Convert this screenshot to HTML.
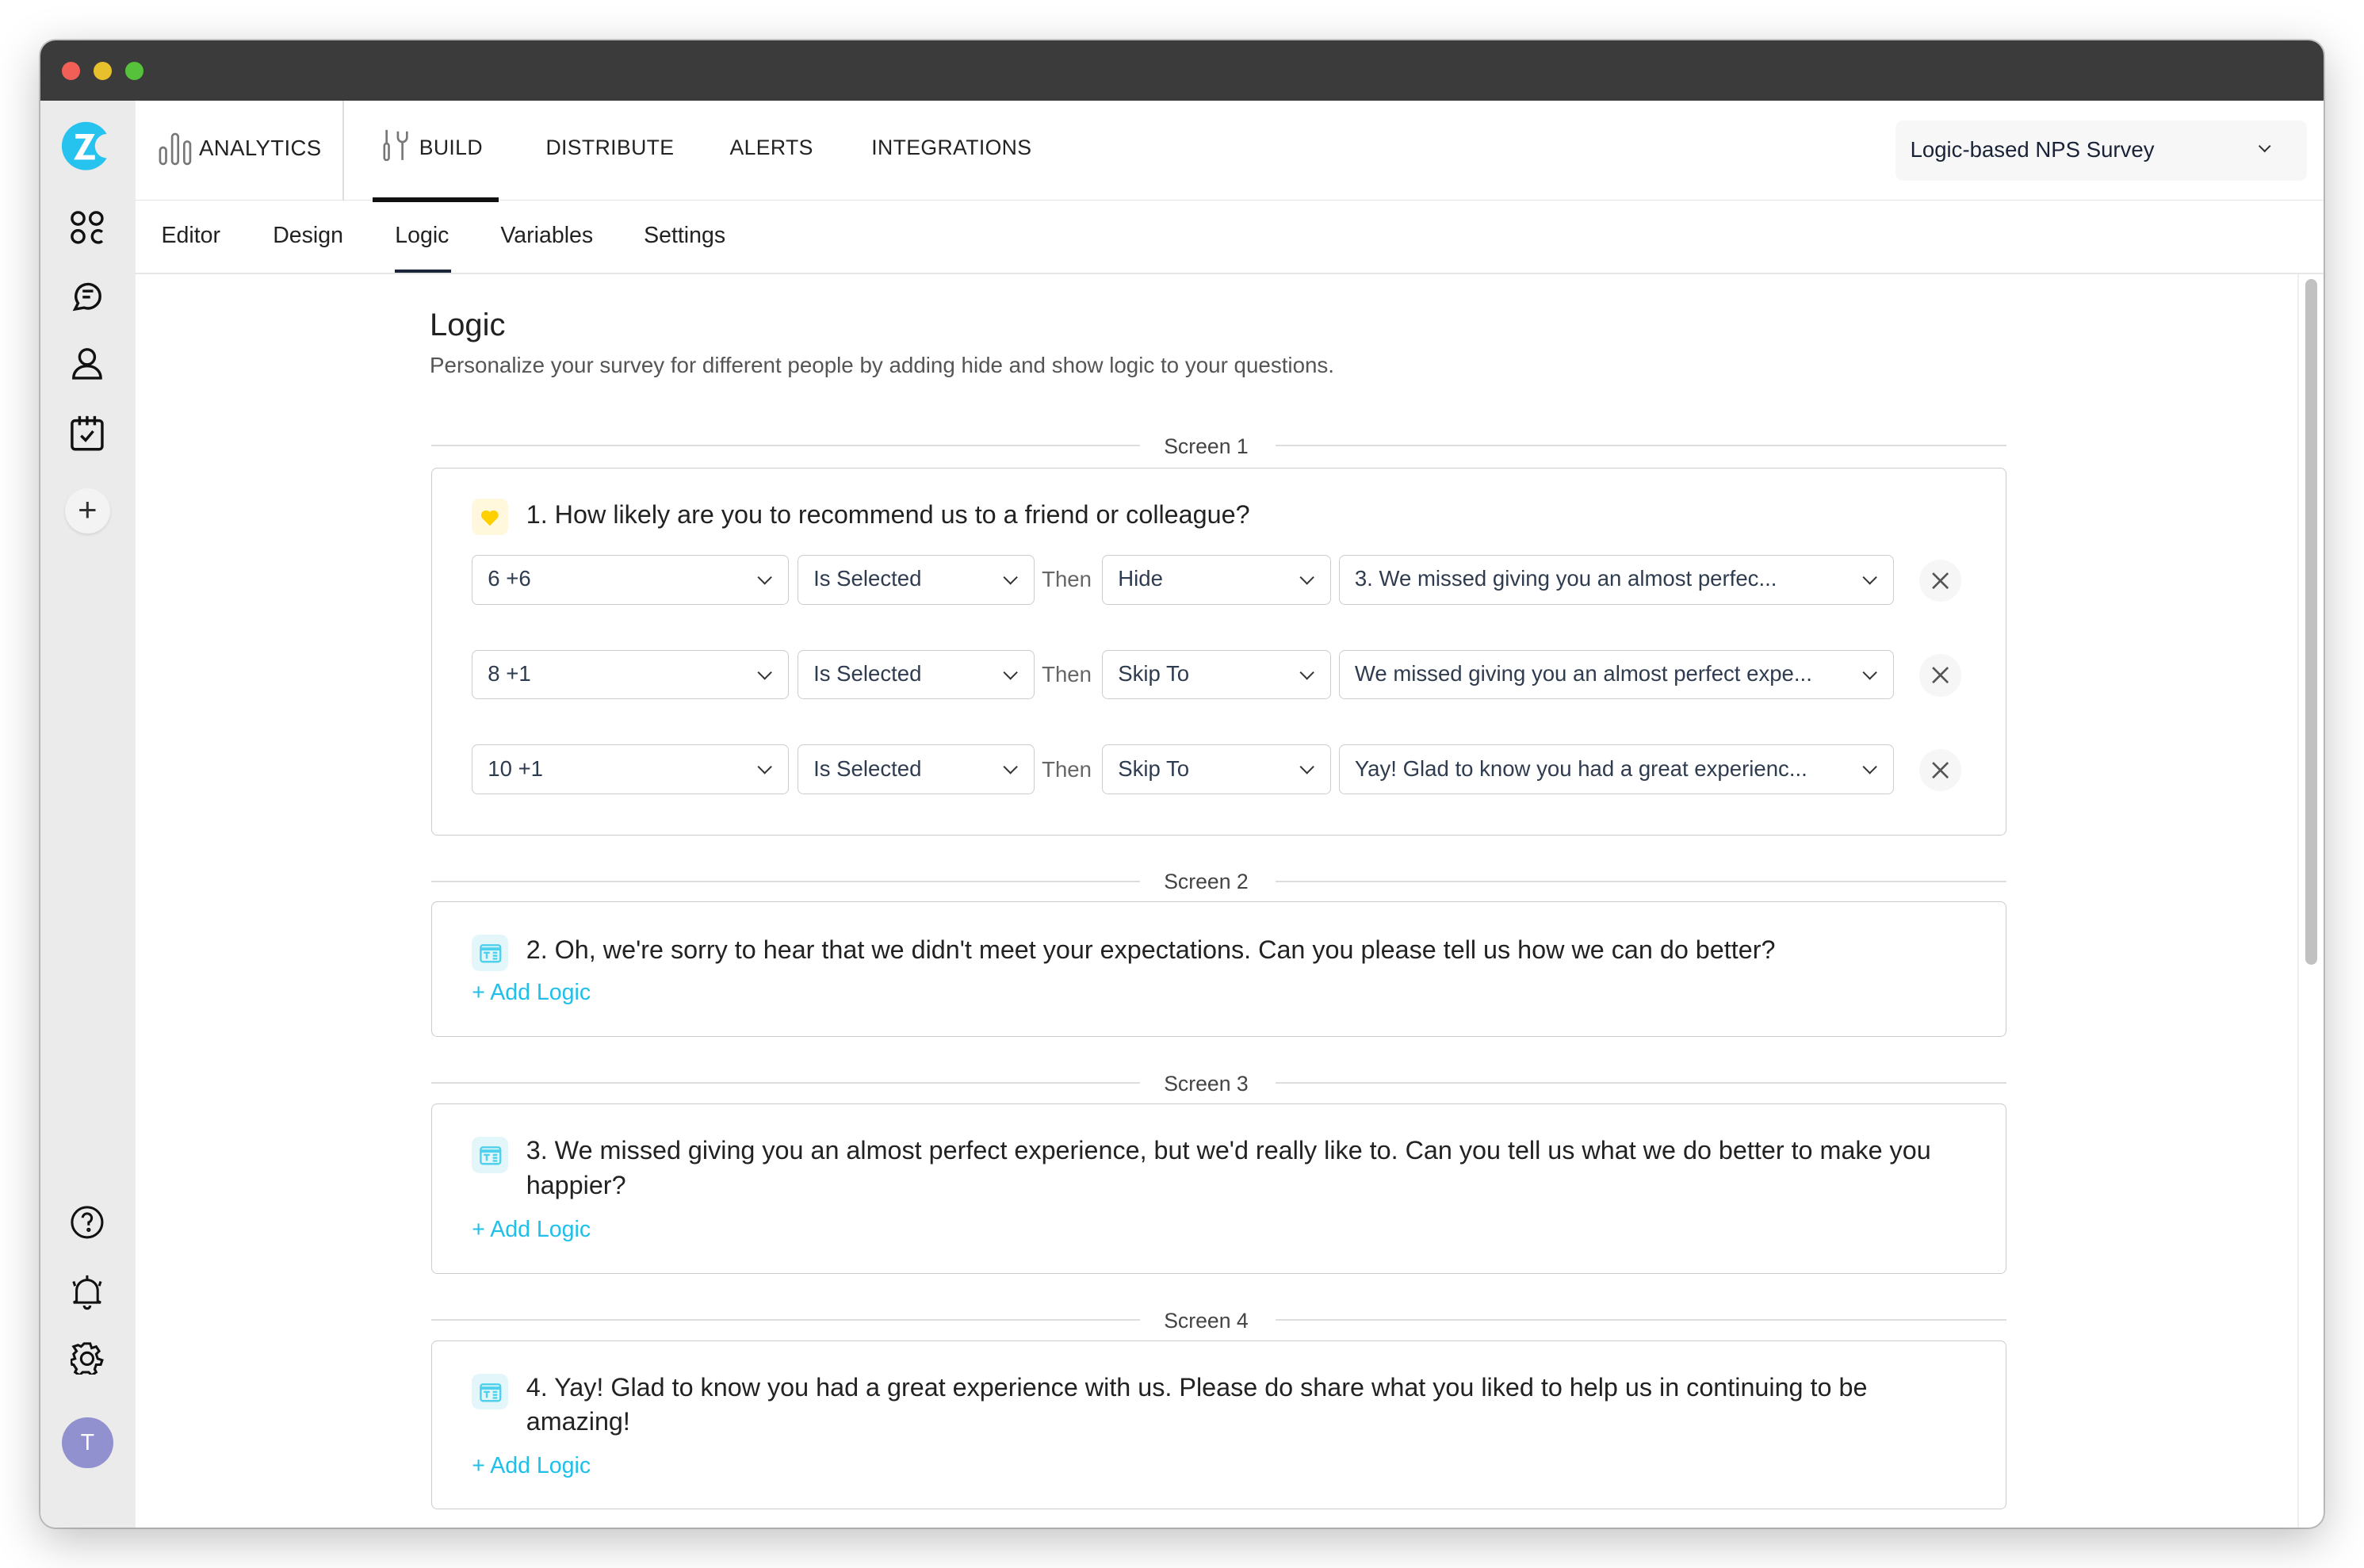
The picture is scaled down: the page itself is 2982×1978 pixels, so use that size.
<!DOCTYPE html>
<html><head><meta charset="utf-8">
<style>
*{box-sizing:border-box;margin:0;padding:0}
html,body{width:2982px;height:1978px;overflow:hidden;background:#fff}
#w{zoom:1.9018;width:1568px;height:1040px;position:relative;font-family:"Liberation Sans",sans-serif;color:#222}
.a{position:absolute}
.win{left:27px;top:27px;width:1514px;height:986px;border-radius:10px;overflow:hidden;background:#fff;box-shadow:0 8px 30px rgba(0,0,0,.25),0 0 0 1px rgba(0,0,0,.2)}
.title{left:0;top:0;width:1514px;height:40px;background:#3b3b3b}
.dot{width:12px;height:12px;border-radius:50%;top:14px}
.side{left:0;top:40px;width:63px;height:946px;background:#ebebeb}
.top{left:63px;top:40px;width:1451px;height:66px;border-bottom:1px solid #e6e6e6}
.nav{font-size:14px;color:#222;letter-spacing:.2px;top:23px}
.sub{font-size:15px;top:121px}
.field{height:33px;border:1px solid #ccc;border-radius:4px;font-size:14.5px;color:#2f3c50;padding:7px 10px;white-space:nowrap;overflow:hidden}
.chev{position:absolute;right:12px;top:11px;width:7px;height:7px;border-right:1.1px solid #333;border-bottom:1.1px solid #333;transform:rotate(45deg)}
.then{font-size:14.5px;color:#666}
.xb{width:28px;height:28px;border-radius:50%;background:#f6f6f6}
.card{border:1px solid #ccc;border-radius:4px;left:286px;width:1045px}
.sl{height:1px;background:#ddd}
.st{font-size:14px;color:#444}
.q{font-size:17px;color:#222;line-height:23px}
.add{font-size:15px;color:#1ec0ea}
.ic{width:24px;height:24px;border-radius:5px;background:#e3f7fb}
</style></head><body><div id="w">
<div class="a win">
 <div class="a title"></div>
 <div class="a dot" style="left:14px;background:#f15f56"></div>
 <div class="a dot" style="left:35px;background:#e8c02e"></div>
 <div class="a dot" style="left:56px;background:#56c13b"></div>
 <div class="a side">
  <svg class="a" style="left:13px;top:12px" width="36" height="36" viewBox="0 0 36 36"><circle cx="17" cy="18" r="16" fill="#27c3ef"/><circle cx="31" cy="18" r="8" fill="#ebebeb"/><path d="M10 10h13l-8 14h8v3H9l8-14H10z" fill="#fff"/></svg>
  <svg class="a" style="left:20px;top:73px" width="22" height="22" viewBox="0 0 22 22" fill="none" stroke="#111" stroke-width="1.8"><rect x="1" y="1" width="8" height="8" rx="4"/><rect x="13" y="1" width="8" height="8" rx="4"/><rect x="1" y="13" width="8" height="8" rx="4"/><path d="M21 14a4 4 0 1 0 0 6"/></svg>
  <svg class="a" style="left:20px;top:118px" width="22" height="22" viewBox="0 0 22 22" fill="none" stroke="#111" stroke-width="1.8"><path d="M3 20l2-4a8 8 0 1 1 4 3z"/><path d="M8 8h7M8 12h5"/></svg>
  <svg class="a" style="left:20px;top:163px" width="22" height="22" viewBox="0 0 22 22" fill="none" stroke="#111" stroke-width="1.8"><circle cx="11" cy="7" r="5"/><path d="M2 21c0-5 4-8 9-8s9 3 9 8z"/></svg>
  <svg class="a" style="left:20px;top:208px" width="22" height="24" viewBox="0 0 22 24" fill="none" stroke="#111" stroke-width="1.8"><rect x="1" y="4" width="20" height="19" rx="2"/><path d="M6 1v6M11 1v6M16 1v6M7 14l3 3 5-6"/></svg>
  <div class="a" style="left:16px;top:257px;width:30px;height:30px;border-radius:50%;background:#f3f3f3;box-shadow:0 1px 2px rgba(0,0,0,.1);font-size:22px;line-height:28px;text-align:center;color:#333">+</div>
  <svg class="a" style="left:20px;top:733px" width="22" height="22" viewBox="0 0 22 22" fill="none" stroke="#111" stroke-width="1.6"><circle cx="11" cy="11" r="10"/><path d="M8 8a3 3 0 1 1 4 3v2"/><circle cx="12" cy="16" r=".6"/></svg>
  <svg class="a" style="left:20px;top:778px" width="22" height="24" viewBox="0 0 22 24" fill="none" stroke="#111" stroke-width="1.6"><path d="M4 18V11a7 7 0 0 1 14 0v7l2 1H2z"/><path d="M9 21a2 2 0 0 0 4 0M11 1v3M2 5l1 3M20 5l-1 3"/></svg>
  <svg class="a" style="left:20px;top:823px" width="22" height="22" viewBox="0 0 22 22" fill="none" stroke="#111" stroke-width="1.6"><circle cx="11" cy="11" r="4"/><path d="M9 1h4l1 3 3-1 2 3-2 2 1 3 3 1v0l-1 3-3 0-1 3 1 2-3 2-2-2h-4l-2 2-3-2 1-2-2-3H1l-1-3 3-1-1-3 2-2-2-3 3-1 2 1z"/></svg>
  <div class="a" style="left:14px;top:873px;width:34px;height:34px;border-radius:50%;background:#9291cf;color:#fff;font-size:15px;text-align:center;line-height:34px">T</div>
 </div>
 <div class="a top">
  <div class="a" style="left:137px;top:0;width:1px;height:66px;background:#ddd"></div>
  <svg class="a" style="left:15px;top:21px" width="22" height="22" viewBox="0 0 22 22" fill="none" stroke="#777" stroke-width="1.4"><rect x="1" y="10" width="4" height="11" rx="2"/><rect x="9" y="1" width="4" height="20" rx="2"/><rect x="17" y="6" width="4" height="15" rx="2"/></svg>
  <div class="a nav" style="left:42px;font-size:14.5px">ANALYTICS</div>
  <svg class="a" style="left:163px;top:18px" width="20" height="22" viewBox="0 0 20 22" fill="none" stroke="#777" stroke-width="1.4"><rect x="2" y="10" width="3" height="11" rx="1.5"/><path d="M3.5 1v9M11 2v4a3 3 0 0 0 6 0V2M14 9v12"/></svg>
  <div class="a nav" style="left:188px">BUILD</div>
  <div class="a" style="left:157px;top:64px;width:84px;height:3px;background:#111"></div>
  <div class="a nav" style="left:272px">DISTRIBUTE</div>
  <div class="a nav" style="left:394px">ALERTS</div>
  <div class="a nav" style="left:488px">INTEGRATIONS</div>
  <div class="a" style="left:1167px;top:13px;width:273px;height:40px;background:#f7f7f7;border-radius:5px"></div>
  <div class="a" style="left:1177px;top:24px;font-size:14.5px;color:#1a2238">Logic-based NPS Survey</div>
  <div class="chev" style="left:1409px;right:auto;top:27px;width:6px;height:6px"></div>
 </div>
 <div class="a sub" style="left:80px">Editor</div>
 <div class="a sub" style="left:154px">Design</div>
 <div class="a sub" style="left:235px">Logic</div>
 <div class="a" style="left:235px;top:152px;width:37px;height:3px;background:#1b2538"></div>
 <div class="a sub" style="left:305px">Variables</div>
 <div class="a sub" style="left:400px">Settings</div>
 <div class="a" style="left:63px;top:154px;width:1451px;height:1px;background:#e6e6e6"></div>
 <div class="a" style="left:1497px;top:155px;width:1px;height:831px;background:#eee"></div>
 <div class="a" style="left:1502px;top:158px;width:8px;height:455px;border-radius:4px;background:#c1c1c1"></div>
</div>

<div class="a" style="left:285px;top:204px;font-size:21px;color:#222">Logic</div>
<div class="a" style="left:285px;top:234px;font-size:14.6px;color:#555">Personalize your survey for different people by adding hide and show logic to your questions.</div>

<!-- Screen 1 -->
<div class="a sl" style="left:286px;top:295px;width:470px"></div>
<div class="a st" style="left:772px;top:288px">Screen 1</div>
<div class="a sl" style="left:846px;top:295px;width:485px"></div>
<div class="a card" style="top:310px;height:244px"></div>
<div class="a ic" style="left:313px;top:331px;background:#fff8dc"><svg width="24" height="24" viewBox="0 0 24 24"><path d="M12 18l-5-5a3 3 0 0 1 5-4 3 3 0 0 1 5 4z" fill="#ffd000"/></svg></div>
<div class="a q" style="left:349px;top:330px">1. How likely are you to recommend us to a friend or colleague?</div>

<div class="a field" style="left:313px;top:368px;width:210px">6 +6<div class="chev"></div></div>
<div class="a field" style="left:529px;top:368px;width:157px">Is Selected<div class="chev"></div></div>
<div class="a then" style="left:691px;top:376px">Then</div>
<div class="a field" style="left:731px;top:368px;width:152px">Hide<div class="chev"></div></div>
<div class="a field" style="left:888px;top:368px;width:368px">3. We missed giving you an almost perfec...<div class="chev"></div></div>
<div class="a xb" style="left:1273px;top:371px"><svg width="28" height="28"><path d="M9 9l10 10M19 9L9 19" stroke="#555" stroke-width="1.4"/></svg></div>

<div class="a field" style="left:313px;top:431px;width:210px">8 +1<div class="chev"></div></div>
<div class="a field" style="left:529px;top:431px;width:157px">Is Selected<div class="chev"></div></div>
<div class="a then" style="left:691px;top:439px">Then</div>
<div class="a field" style="left:731px;top:431px;width:152px">Skip To<div class="chev"></div></div>
<div class="a field" style="left:888px;top:431px;width:368px">We missed giving you an almost perfect expe...<div class="chev"></div></div>
<div class="a xb" style="left:1273px;top:434px"><svg width="28" height="28"><path d="M9 9l10 10M19 9L9 19" stroke="#555" stroke-width="1.4"/></svg></div>

<div class="a field" style="left:313px;top:494px;width:210px">10 +1<div class="chev"></div></div>
<div class="a field" style="left:529px;top:494px;width:157px">Is Selected<div class="chev"></div></div>
<div class="a then" style="left:691px;top:502px">Then</div>
<div class="a field" style="left:731px;top:494px;width:152px">Skip To<div class="chev"></div></div>
<div class="a field" style="left:888px;top:494px;width:368px">Yay! Glad to know you had a great experienc...<div class="chev"></div></div>
<div class="a xb" style="left:1273px;top:497px"><svg width="28" height="28"><path d="M9 9l10 10M19 9L9 19" stroke="#555" stroke-width="1.4"/></svg></div>

<!-- Screen 2 -->
<div class="a sl" style="left:286px;top:584px;width:470px"></div>
<div class="a st" style="left:772px;top:577px">Screen 2</div>
<div class="a sl" style="left:846px;top:584px;width:485px"></div>
<div class="a card" style="top:598px;height:90px"></div>
<div class="a ic" style="left:313px;top:620px"><svg width="24" height="24" viewBox="0 0 24 24" fill="none" stroke="#4fd0ec" stroke-width="1.3"><rect x="6" y="7" width="13" height="11" rx="1.5"/><path d="M6 9.5h13" stroke-width="2"/><path d="M8 12h4M10 12v4M14 12h3M14 14h3M14 16h3"/></svg></div>
<div class="a q" style="left:349px;top:619px">2. Oh, we're sorry to hear that we didn't meet your expectations. Can you please tell us how we can do better?</div>
<div class="a add" style="left:313px;top:650px">+ Add Logic</div>

<!-- Screen 3 -->
<div class="a sl" style="left:286px;top:718px;width:470px"></div>
<div class="a st" style="left:772px;top:711px">Screen 3</div>
<div class="a sl" style="left:846px;top:718px;width:485px"></div>
<div class="a card" style="top:732px;height:113px"></div>
<div class="a ic" style="left:313px;top:754px"><svg width="24" height="24" viewBox="0 0 24 24" fill="none" stroke="#4fd0ec" stroke-width="1.3"><rect x="6" y="7" width="13" height="11" rx="1.5"/><path d="M6 9.5h13" stroke-width="2"/><path d="M8 12h4M10 12v4M14 12h3M14 14h3M14 16h3"/></svg></div>
<div class="a q" style="left:349px;top:752px;width:960px">3. We missed giving you an almost perfect experience, but we'd really like to. Can you tell us what we do better to make you happier?</div>
<div class="a add" style="left:313px;top:807px">+ Add Logic</div>

<!-- Screen 4 -->
<div class="a sl" style="left:286px;top:875px;width:470px"></div>
<div class="a st" style="left:772px;top:868px">Screen 4</div>
<div class="a sl" style="left:846px;top:875px;width:485px"></div>
<div class="a card" style="top:889px;height:112px"></div>
<div class="a ic" style="left:313px;top:911px"><svg width="24" height="24" viewBox="0 0 24 24" fill="none" stroke="#4fd0ec" stroke-width="1.3"><rect x="6" y="7" width="13" height="11" rx="1.5"/><path d="M6 9.5h13" stroke-width="2"/><path d="M8 12h4M10 12v4M14 12h3M14 14h3M14 16h3"/></svg></div>
<div class="a q" style="left:349px;top:909px;width:900px">4. Yay! Glad to know you had a great experience with us. Please do share what you liked to help us in continuing to be amazing!</div>
<div class="a add" style="left:313px;top:964px">+ Add Logic</div>
</div></body></html>
